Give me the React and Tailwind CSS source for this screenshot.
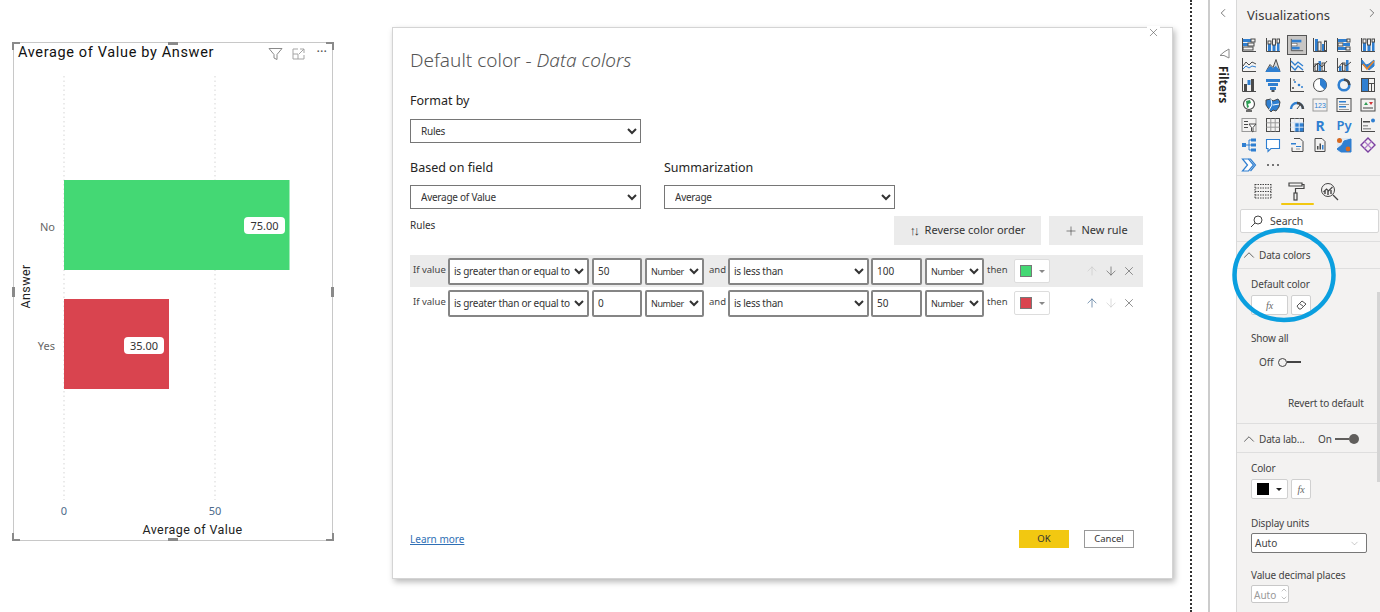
import { ArrowDown, ArrowUp, ChevronDown, ChevronLeft, ChevronRight, ChevronUp, Plus, X } from "lucide-react";

const B = "#2f7fd1";
const D = "#4a4a4a";
const G = "#9a9a9a";

// small helpers for the visual picker icons (16 x 16 box)
const Axis = () => <path d="M1.5 1v13.5H15" fill="none" stroke={D} strokeWidth="1" />;
const R = ({ x, y, w, h, c = B, o }) => <rect x={x} y={y} width={w} height={h} fill={o ? "none" : c} stroke={o ? c : "none"} />;
const Poly = ({ d, c = D, f = "none", w = 1 }) => <path d={d} fill={f} stroke={c} strokeWidth={w} />;

const vizIcons = [
  <><Axis /><R x={2} y={2} w={8} h={3} /><R x={10} y={2} w={4} h={3} c={D} o /><R x={2} y={6} w={5} h={3} /><R x={7} y={6} w={6} h={3} c={D} o /><R x={2} y={10} w={10} h={3} c={D} o /></>,
  <><Axis /><R x={3} y={7} w={3} h={7} /><R x={3} y={4} w={3} h={3} c={D} o /><R x={7.5} y={8} w={3} h={6} /><R x={7.5} y={2} w={3} h={6} c={D} o /><R x={12} y={6} w={2.5} h={8} /><R x={12} y={2} w={2.5} h={4} c={D} o /></>,
  null,
  <><Axis /><R x={3} y={2} w={3} h={12} /><R x={6} y={5} w={3} h={9} c={D} o /><R x={10} y={7} w={2.5} h={7} /><R x={12.5} y={4} w={2} h={10} c={D} o /></>,
  <><Axis /><R x={2} y={2} w={9} h={3} /><R x={11} y={2} w={3} h={3} c={D} o /><R x={2} y={6} w={5} h={3} c={D} o /><R x={7} y={6} w={7} h={3} /><R x={2} y={10} w={8} h={3} /><R x={10} y={10} w={4} h={3} c={D} o /></>,
  <><Axis /><R x={3} y={6} w={3} h={8} /><R x={3} y={2} w={3} h={4} c={D} o /><R x={7.5} y={8} w={3} h={6} /><R x={7.5} y={2} w={3} h={6} c={D} o /><R x={12} y={5} w={2.5} h={9} /><R x={12} y={2} w={2.5} h={3} c={D} o /></>,

  <><Axis /><Poly d="M2 9l3-4 3 3 3-3 4 2" /><Poly d="M2 12l3-3 3 2 3-2 4 1" c={B} /></>,
  <><Poly d="M1 14.5l4-7 3 3 3-8 4 12z" c={D} f="#d8d8d8" /><Poly d="M1 14.5l4-5 3 2 3-2 4 5z" c={B} f={B} /></>,
  <><Axis /><Poly d="M2 4l4 4 3-3 5 4" c={B} w={1.3} /><Poly d="M2 9l4 4 3-4 5 4" c={B} w={1.3} /></>,
  <><Axis /><R x={3} y={7} w={2.5} h={7} c={D} o /><R x={6.5} y={4} w={2.5} h={10} /><R x={10} y={6} w={2.5} h={8} c={D} o /><Poly d="M2 10l4-4 4 4 5-6" /></>,
  <><Axis /><R x={3} y={9} w={2.5} h={5} /><R x={6.5} y={6} w={2.5} h={8} c={D} o /><R x={10} y={3} w={2.5} h={11} /><Poly d="M2 11l4-5 4 3 5-4" /></>,
  <><Axis /><Poly d="M2 3l4 5 3-1 5-4v6l-5 4-3-3-4-3z" c={B} f={B} /><Poly d="M3 7l4 5 7-8" c="#e8852b" w={1.6} /></>,

  <><Axis /><R x={3} y={7} w={3} h={7} c={D} /><R x={6.5} y={3} w={3} h={5} /><R x={10} y={2} w={3} h={12} c={D} /></>,
  <><R x={1} y={2} w={14} h={3} /><R x={3} y={6} w={10} h={3} /><R x={5} y={10} w={6} h={3} /><R x={6.5} y={13} w={3} h={2} c={D} /></>,
  <><Axis /><circle cx="4" cy="11" r="1" fill={D} /><circle cx="6" cy="5" r="1" fill={B} /><circle cx="10" cy="8" r="1.3" fill={B} /><circle cx="13" cy="10" r="1" fill={B} /><circle cx="5" cy="3" r=".8" fill={D} /></>,
  <><circle cx="8" cy="8" r="6.5" fill="#fff" stroke={D} /><path d="M8 1.5a6.5 6.5 0 0 1 4.5 11.2L8 8z" fill={B} /></>,
  <><circle cx="8" cy="8" r="5.3" fill="none" stroke={B} strokeWidth="2.6" /><path d="M8 2.7a5.3 5.3 0 0 1 5.3 5.3" fill="none" stroke={D} strokeWidth="2.6" /></>,
  <><R x={1.5} y={1.5} w={7} h={13} /><R x={8.5} y={1.5} w={6} h={5} c={D} o /><R x={8.5} y={6.5} w={3} h={8} c={D} o /><R x={11.5} y={6.5} w={3} h={8} c={D} o /><R x={1.5} y={1.5} w={13} h={13} c={D} o /></>,

  <><circle cx="8" cy="7" r="5.5" fill="#fff" stroke={D} strokeWidth="1.2" /><path d="M5 4l4-1 1 3-3 1 1 3-2 1z" fill="#2f9e55" /><path d="M5 14h6" stroke={D} strokeWidth="1.6" /></>,
  <><Poly d="M1 3l5-1 2 2 5-2 2 3-1 5-3 4-3-1-2 2-3-4-2-3z" c={D} f={B} /><Poly d="M6 2l1 6-3 5M8 8l6-1" c="#fff" /></>,
  <><path d="M2 12a6 6 0 0 1 12 0" fill="none" stroke={B} strokeWidth="2.4" /><path d="M8 6a6 6 0 0 1 6 6" fill="none" stroke={D} strokeWidth="2.4" /><path d="M8 12l3-4" stroke={D} /></>,
  <><R x={1} y={2} w={14} h={12} c={G} o /><text x="8" y="11" fontSize="7" textAnchor="middle" fill={B} fontFamily="Liberation Sans">123</text></>,
  <><R x={1} y={1.5} w={14} h={13} c={D} o /><R x={3} y={4} w={7} h={1.5} /><R x={3} y={7} w={10} h={1} c={G} /><R x={3} y={9} w={7} h={1.5} /><R x={3} y={12} w={10} h={1} c={G} /></>,
  <><R x={1} y={2} w={14} h={12} c={D} o /><path d="M4 8l2-3 2 3z" fill="#2f9e55" /><path d="M9 5h4l-2 3z" fill="#d13438" /><R x={3} y={10} w={10} h={2} c={G} /></>,

  <><R x={1} y={1.5} w={14} h={13} c={G} o /><R x={3} y={4} w={4} h={1} c={D} /><R x={3} y={7} w={4} h={1} c={D} /><R x={3} y={10} w={4} h={1} c={D} /><Poly d="M8 7h7l-3 3.5V15l-1.5-1v-3.5z" c={D} f="#fff" /></>,
  <><R x={1.5} y={1.5} w={13} h={13} c={D} o /><Poly d="M1.5 5.8h13M1.5 10.2h13M5.8 1.5v13M10.2 1.5v13" c={G} /></>,
  <><R x={1.5} y={1.5} w={13} h={13} c={D} o /><R x={5.8} y={5.8} w={8.7} h={8.7} /><Poly d="M1.5 5.8h13M1.5 10.2h13M5.8 1.5v13M10.2 1.5v13" c="#d8e6f5" /></>,
  <text x="8" y="13.5" fontSize="14" fontWeight="700" textAnchor="middle" fill={B} fontFamily="Noto Sans">R</text>,
  <text x="8" y="12.5" fontSize="13" fontWeight="600" textAnchor="middle" fill={B} fontFamily="Noto Sans">Py</text>,
  <><Axis /><R x={3} y={4} w={7} h={1.5} c={D} /><R x={3} y={8} w={5} h={1.5} c={G} /><R x={3} y={11} w={8} h={1.5} c={G} /><circle cx="13" cy="3.5" r="2" fill={B} /></>,

  <><R x={1} y={6} w={4} h={4} /><Poly d="M5 8h3M8 3v10M8 3h2M8 8h2M8 13h2" c={B} /><R x={10} y={1.5} w={5} h={3} /><R x={10} y={6.5} w={5} h={3} /><R x={10} y={11.5} w={5} h={3} /></>,
  <Poly d="M1.5 2.5h13v9H6l-3 3v-3H1.5z" c={B} f="#fff" w={1.1} />,
  <><Poly d="M5 1.5h6l3 3v10H3v-4" c={D} /><R x={2} y={6} w={5} h={1.5} /><R x={7} y={9} w={5} h={1} /><R x={7} y={11.5} w={4} h={1} c={G} /></>,
  <><Poly d="M3 1.5h7l3 3v10H3z" c={D} /><R x={5} y={9} w={1.5} h={3.5} c={D} /><R x={7.5} y={6.5} w={1.5} h={6} c={D} /><R x={10} y={8} w={1.5} h={4.5} c={B} /></>,
  <><R x={1} y={1} w={14} h={14} c="#dfe9f3" /><Poly d="M1 12l5-4 2-4 7-2v13H5z" c={B} f={B} /><circle cx="3.5" cy="3.5" r="2.5" fill="#d9691e" /><circle cx="12" cy="12" r="2.4" fill="#d9691e" /></>,
  <><path d="M8 1l7 7-7 7-7-7z" fill="none" stroke="#7a3fa0" strokeWidth="1.4" /><path d="M4.5 4.5l7 7M11.5 4.5l-7 7" stroke="#b07cc9" strokeWidth="1.2" /></>,

  <><Poly d="M1.5 2h6l5 6-5 6h-6l5-6z" c={B} f="#fff" w={1.2} /><Poly d="M7.5 2h2l5 6-5 6" c={B} w={1.2} /></>,
  <g fill={D}><circle cx="3" cy="8" r="1" /><circle cx="8" cy="8" r="1" /><circle cx="13" cy="8" r="1" /></g>,
];

function VizIcon({ icon }) {
  if (icon === null) {
    // clustered bar is the selected visual
    return (
      <div className="flex h-[18px] w-[18px] items-center justify-center bg-[#c8c6c4] outline outline-[1.5px] outline-[#555]">
        <svg width="14" height="14" viewBox="0 0 16 16">
          <Axis />
          <rect x="2" y="2" width="11" height="3" fill={B} />
          <rect x="2" y="6" width="6" height="3" fill="#fff" stroke={D} strokeWidth=".6" />
          <rect x="2" y="10" width="9" height="3" fill={B} />
        </svg>
      </div>
    );
  }
  return (
    <svg width="16" height="16" viewBox="0 0 16 16">
      {icon}
    </svg>
  );
}

function Select({ value, className = "", text = "text-[10px] tracking-[-0.25px]" }) {
  return (
    <select
      defaultValue={value}
      className={`shrink-0 bg-white text-[#333] ${text} ${className}`}
    >
      <option>{value}</option>
    </select>
  );
}

function FormSelect({ value, className = "" }) {
  return <Select value={value} className={`h-[24px] border border-[#767676] pl-[6px] ${className}`} />;
}

function RuleRow({ first, second, color, active, upOn, downOn }) {
  const rowSelect = "h-[27px] rounded-[2px] border-2 border-[#858585]";
  const numInput = "h-[27px] w-[50px] shrink-0 rounded-[2px] border-2 border-[#858585] bg-white pl-1 text-[10px] text-[#333]";
  const unitText = "text-[9px] tracking-[-0.4px]";
  return (
    <div className={`flex h-[32px] items-center pl-[3px] text-[9.5px] text-[#444] ${active ? "bg-[#ebebeb]" : ""}`}>
      <span className="w-[35px] shrink-0 -translate-y-[1px] whitespace-nowrap">If value</span>
      <Select value="is greater than or equal to" className={`${rowSelect} w-[141px]`} />
      <input defaultValue={first} className={`${numInput} ml-[3px]`} />
      <Select value="Number" text={unitText} className={`${rowSelect} ml-[3px] w-[59px]`} />
      <span className="ml-[3px] w-[21px] shrink-0 -translate-y-[1px] text-center">and</span>
      <Select value="is less than" className={`${rowSelect} w-[141px]`} />
      <input defaultValue={second} className={`${numInput} ml-[2px] w-[51px]`} />
      <Select value="Number" text={unitText} className={`${rowSelect} ml-[3px] w-[59px]`} />
      <span className="ml-[3px] w-[27px] shrink-0 -translate-y-[1px]">then</span>
      <div className="flex h-[24px] w-[36px] shrink-0 items-center gap-[7px] rounded-[2px] border border-[#ddd] bg-white pl-[5px]">
        <span className="h-[12px] w-[12px] border border-[#777]" style={{ background: color }} />
        <span className="h-0 w-0 border-x-[3px] border-t-[3px] border-x-transparent border-t-[#888]" />
      </div>
      <div className="ml-[35px] flex items-center gap-[4.5px]">
        <ArrowUp size={14} strokeWidth={1.1} className={upOn ? "text-[#355f8a]" : "text-[#c8c8c8]"} />
        <ArrowDown size={14} strokeWidth={1.1} className={downOn ? "text-[#555]" : "text-[#c8c8c8]"} />
        <X size={14} strokeWidth={1.1} className="text-[#555]" />
      </div>
    </div>
  );
}

function Chart() {
  const handle = "absolute bg-[#8a8a8a]";
  return (
    <div className="relative h-[499px] w-[320px] border border-[#c8c8c8] bg-white">
      <div className={`${handle} -left-[2px] -top-[1px] h-[2px] w-[8px]`} />
      <div className={`${handle} -left-[2px] -top-[1px] h-[8px] w-[2px]`} />
      <div className={`${handle} -right-[2px] -top-[1px] h-[2px] w-[8px]`} />
      <div className={`${handle} -right-[2px] -top-[1px] h-[8px] w-[2px]`} />
      <div className={`${handle} -left-[2px] -bottom-[1px] h-[2px] w-[8px]`} />
      <div className={`${handle} -left-[2px] -bottom-[1px] h-[8px] w-[2px]`} />
      <div className={`${handle} -right-[2px] -bottom-[1px] h-[2px] w-[8px]`} />
      <div className={`${handle} -right-[2px] -bottom-[1px] h-[8px] w-[2px]`} />
      <div className={`${handle} left-[154px] -top-[1px] h-[3px] w-[10px]`} />
      <div className={`${handle} left-[154px] -bottom-[1px] h-[3px] w-[10px]`} />
      <div className={`${handle} -left-[2px] top-[244px] h-[10px] w-[3px]`} />
      <div className={`${handle} -right-[2px] top-[244px] h-[10px] w-[3px]`} />

      <div className="flex h-[21px] items-center justify-between pl-[4px] pr-[5px]">
        <span className="whitespace-nowrap font-['Roboto',sans-serif] text-[14.5px] leading-none tracking-[0.65px] text-[#111]">
          Average of Value by Answer
        </span>
        <div className="flex items-center">
          <svg width="15" height="14" viewBox="0 0 15 14" fill="none" stroke="#8a8a8a">
            <path d="M1 1.5h13L9 7.5v5l-3-1.5V7.5z" />
          </svg>
          <svg width="13" height="12" viewBox="0 0 13 12" fill="none" stroke="#a5a5a5" className="ml-[9px]">
            <path d="M6 1H1v10h11V7M1 6h5v5M8 1h4v4M12 1L7 6" />
          </svg>
          <span className="ml-[12px] -translate-y-[2px] text-[13px] leading-none text-[#555]">···</span>
        </div>
      </div>

      <svg width="318" height="477" viewBox="14 64 318 477" className="block">
        <line x1="64" x2="64" y1="76" y2="500" stroke="#d5d5d5" strokeDasharray="1.5 3" />
        <line x1="215" x2="215" y1="76" y2="500" stroke="#d5d5d5" strokeDasharray="1.5 3" />
        <rect x="64" y="180" width="225.5" height="90" fill="#44d874" />
        <rect x="64" y="299" width="105" height="90" fill="#d9444f" />
        <rect x="244" y="217" width="41" height="17" rx="4" fill="#fff" />
        <rect x="124" y="337" width="40" height="17" rx="4" fill="#fff" />
        <g fontFamily="Noto Sans" fontSize="11" fill="#333" textAnchor="middle">
          <text x="264.5" y="230">75.00</text>
          <text x="144" y="350">35.00</text>
        </g>
        <g fontFamily="Noto Sans" fontSize="11" fill="#666" textAnchor="end">
          <text x="55" y="231">No</text>
          <text x="55" y="350">Yes</text>
        </g>
        <g fontFamily="Noto Sans" fontSize="11" fill="#4d6a8a" textAnchor="middle">
          <text x="64" y="515">0</text>
          <text x="215" y="515">50</text>
        </g>
        <g fontFamily="Roboto" fontSize="12.5" fill="#222" textAnchor="middle" letterSpacing=".4">
          <text x="192.5" y="533.5">Average of Value</text>
          <text transform="translate(29.5 286.5) rotate(-90)">Answer</text>
        </g>
      </svg>
    </div>
  );
}

function Dialog() {
  return (
    <div className="relative flex h-[552px] w-[781px] flex-col border border-[#d4d4d4] bg-white pl-[17px] pr-[29px] shadow-[2px_3px_6px_rgba(0,0,0,0.28)]">
      <X size={13} strokeWidth={1.1} className="absolute right-[12px] top-[-2px] text-[#555] bg-white" />
      <div className="mt-[18px] whitespace-nowrap text-[19px] font-light leading-[28px] text-[#555]">
        Default color - <em>Data colors</em>
      </div>
      <div className="mt-[18px] text-[12.5px] leading-[18px] text-[#252423]">Format by</div>
      <FormSelect value="Rules" className="mt-[9px] w-[231px]" />
      <div className="mt-[16px] flex gap-[23px]">
        <div className="flex flex-col">
          <div className="text-[12.5px] leading-[18px] text-[#252423]">Based on field</div>
          <FormSelect value="Average of Value" className="mt-[8px] w-[231px]" />
        </div>
        <div className="flex flex-col">
          <div className="text-[12.5px] leading-[18px] text-[#252423]">Summarization</div>
          <FormSelect value="Average" className="mt-[8px] w-[231px]" />
        </div>
      </div>
      <div className="mt-[7px] flex h-[29px] items-start justify-between">
        <span className="mt-[2px] text-[10px] leading-[14px] text-[#333]">Rules</span>
        <div className="flex gap-[8px]">
          <button className="flex h-[29px] w-[147px] items-center justify-center gap-[5px] bg-[#ebebeb] text-[11px] text-[#333]">
            <span className="pr-[2px] text-[13px] leading-none tracking-[-2.5px]">↑↓</span> Reverse color order
          </button>
          <button className="flex h-[29px] w-[94px] items-center justify-center gap-[3px] bg-[#ebebeb] text-[11px] text-[#333]">
            <Plus size={14} strokeWidth={1} /> New rule
          </button>
        </div>
      </div>
      <div className="mt-[10px] flex flex-col">
        <RuleRow first="50" second="100" color="#44d874" active downOn />
        <RuleRow first="0" second="50" color="#d9444f" upOn />
      </div>
      <div className="mt-auto mb-[30px] flex items-center justify-between">
        <a className="text-[10px] leading-[14px] text-[#2f6fb5] underline">Learn more</a>
        <div className="mr-[9px] flex gap-[15px]">
          <button className="h-[18px] w-[50px] bg-[#f2c811] text-[9.5px] text-[#333]">OK</button>
          <button className="h-[18px] w-[50px] border border-[#999] bg-white text-[9.5px] text-[#333]">Cancel</button>
        </div>
      </div>
    </div>
  );
}

function FiltersPane() {
  return (
    <div className="flex w-[29px] shrink-0 flex-col items-center border-l-2 border-[#ccc] border-r border-r-[#d8d8d8] bg-white">
      <ChevronLeft size={14} strokeWidth={1.2} className="mt-[6px] text-[#444]" />
      <svg width="11" height="11" viewBox="0 0 11 11" className="ml-[3px] mt-[28px]" fill="none" stroke="#8a8a8a">
        <path d="M10 1v9L5 7.5H1L5 4z" />
      </svg>
      <span className="mt-[7px] [writing-mode:vertical-rl] text-[11.5px] font-bold leading-[14px] tracking-[0.2px] text-[#252423]">Filters</span>
    </div>
  );
}

function SectionChevron() {
  return <ChevronUp size={18} strokeWidth={1.2} className="-mx-[3px] shrink-0 text-[#555]" />;
}

function VizPane() {
  const label = "text-[10px] leading-[14px] tracking-[-0.15px] text-[#444]";
  const line = "border-t border-[#dedede]";
  return (
    <div className="relative w-[143px] shrink-0 bg-[#f3f2f1] text-[#444]">
      <div className="flex h-[35px] items-start justify-between pl-[10px] pr-[1px] pt-[6px]">
        <span className="text-[13px] leading-[18px] text-[#3b3a39]">Visualizations</span>
        <ChevronRight size={14} strokeWidth={1.2} className="text-[#444]" />
      </div>

      <div className="grid grid-cols-6 auto-rows-[20px]">
        {vizIcons.map((icon, i) => (
          <div key={i} className="flex items-center justify-center">
            <VizIcon icon={icon} />
          </div>
        ))}
      </div>

      <div className={`${line} ml-0 flex h-[28px] items-center gap-[15px] pl-[17px] pt-[3px]`}>
        <svg width="18" height="16" viewBox="0 0 18 16" fill="none" stroke="#444">
          <path d="M1 1.5h16M1 5h16M1 8.5h16M1 12h16M1 15h16" strokeDasharray="1.5 1" />
          <path d="M1 1v14M17 1v14" strokeDasharray="1.5 1" />
        </svg>
        <svg width="18" height="20" viewBox="0 0 18 20" fill="none" stroke="#444" strokeWidth="1.2">
          <path d="M2 2h13v3H2zM15 3.5h2v4H8.5V12" />
          <rect x="7" y="12" width="3" height="7" />
        </svg>
        <svg width="19" height="19" viewBox="0 0 19 19" fill="none" stroke="#444">
          <circle cx="8" cy="8" r="6.5" />
          <path d="M13 13l5 5" strokeWidth="1.3" />
          <path d="M3.5 10l3-3 2 2 4-4" strokeWidth="1.2" />
          <path d="M5 9v3M8 9v4M11 8v4" strokeWidth="1.4" />
        </svg>
      </div>
      <div className="ml-[44px] h-[2px] w-[33px] rounded-full bg-[#f2c811]" />

      <div className="ml-[3px] mt-[4px] flex h-[24px] w-[139px] items-center gap-[7px] rounded-[2px] border border-[#d6d6d6] bg-white pl-[9px] pt-[2px] text-[10.5px] text-[#444]">
        <svg width="13" height="13" viewBox="0 0 13 13" fill="none" stroke="#444" className="-mt-[2px]">
          <circle cx="8" cy="5" r="4" />
          <path d="M5 8l-4 4" />
        </svg>
        Search
      </div>

      <div className={`${line} mt-[8px] flex h-[27px] items-center border-b-0 pl-[6px]`}>
        <SectionChevron />
        <span className="ml-[4px] text-[10px] tracking-[-0.15px] text-[#444]">Data colors</span>
      </div>
      <div className={`${line} pl-[14px] pt-[8px]`}>
        <div className={label}>Default color</div>
        <div className="mt-[4px] flex gap-[3px]">
          <div className="flex h-[20px] w-[37px] items-center justify-center rounded-[2px] border border-[#d0d0d0] bg-white font-['Liberation_Serif',serif] text-[10px] italic text-[#666]">fx</div>
          <div className="flex h-[20px] w-[20px] items-center justify-center rounded-[2px] border border-[#d0d0d0] bg-white">
            <svg width="11" height="10" viewBox="0 0 11 10" fill="none" stroke="#555">
              <path d="M1 6l5-5 4 3-5 5H3z" />
              <path d="M3.5 3.5l4 3" />
            </svg>
          </div>
        </div>
        <div className={`${label} mt-[16px]`}>Show all</div>
        <div className="ml-[8px] mt-[10px] flex items-center">
          <span className="mr-[4px] text-[10px] leading-[14px] text-[#444]">Off</span>
          <span className="h-[9px] w-[9px] rounded-full border-[1.5px] border-[#444]" />
          <span className="h-[1.5px] w-[14px] bg-[#444]" />
        </div>
        <div className={`${label} ml-[37px] mt-[27px] text-[#3a6a99]`}>Revert to default</div>
      </div>

      <div className={`${line} mt-[13px] flex h-[29px] items-center pl-[6px] pt-[2px]`}>
        <SectionChevron />
        <span className="ml-[4px] w-[59px] text-[10px] tracking-[-0.15px] text-[#444]">Data lab...</span>
        <span className="text-[10px] text-[#444]">On</span>
        <span className="ml-[3px] h-[1.5px] w-[14px] bg-[#605e5c]" />
        <span className="h-[10px] w-[10px] rounded-full bg-[#605e5c]" />
      </div>
      <div className={`${line} pl-[14px] pt-[8px]`}>
        <div className={label}>Color</div>
        <div className="mt-[4px] flex gap-[3px]">
          <div className="flex h-[20px] w-[37px] items-center gap-[7px] rounded-[2px] border border-[#d0d0d0] bg-white pl-[5px]">
            <span className="h-[12px] w-[12px] bg-black" />
            <span className="h-0 w-0 border-x-[3px] border-t-[3px] border-x-transparent border-t-[#222]" />
          </div>
          <div className="flex h-[20px] w-[20px] items-center justify-center rounded-[2px] border border-[#d0d0d0] bg-white font-['Liberation_Serif',serif] text-[10px] italic text-[#666]">fx</div>
        </div>
        <div className={`${label} mt-[17px]`}>Display units</div>
        <div className="mt-[3px] flex h-[20px] w-[116px] items-center justify-between rounded-[2px] border border-[#777] bg-white pl-[3px] pr-[6px] text-[10px] text-[#444]">
          Auto
          <ChevronDown size={11} strokeWidth={1} className="text-[#888]" />
        </div>
        <div className={`${label} mt-[15px]`}>Value decimal places</div>
        <div className="mt-[3px] flex h-[18px] w-[38px] items-center justify-between rounded-[2px] border border-[#c8c8c8] bg-white pl-[2px] text-[10px] text-[#999]">
          <span className="pt-[3px]">Auto</span>
          <div className="flex flex-col">
            <ChevronUp size={8} strokeWidth={1.2} className="text-[#666]" />
            <ChevronDown size={8} strokeWidth={1.2} className="text-[#666]" />
          </div>
        </div>
      </div>

      {/* pane scrollbar */}
      <div className="absolute right-0 top-[292px] h-[190px] w-[3px] bg-[#d4d4d4]" />
      {/* blue hand-drawn highlight over the data colors section */}
      <svg width="112" height="102" viewBox="0 0 112 102" className="absolute left-[-7px] top-[225px]" fill="none">
        <ellipse cx="54" cy="50" rx="49.5" ry="45" stroke="#0b9fdf" strokeWidth="4.5" />
      </svg>
    </div>
  );
}

export default function App() {
  return (
    <div className="flex h-[612px] w-[1380px] overflow-hidden bg-white font-['Noto_Sans',sans-serif]">
      <div className="w-[392px] shrink-0 pl-[13px] pt-[42px]">
        <Chart />
      </div>
      <div className="w-[798px] shrink-0 pt-[27px]">
        <Dialog />
      </div>
      <div className="w-[18px] shrink-0 border-l-2 border-dotted border-[#333]" />
      <FiltersPane />
      <VizPane />
    </div>
  );
}
